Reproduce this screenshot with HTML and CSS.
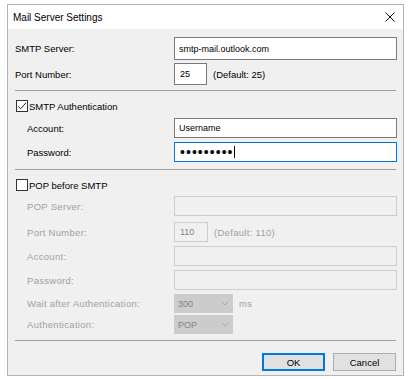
FILE: index.html
```html
<!DOCTYPE html>
<html>
<head>
<meta charset="utf-8">
<link rel="stylesheet" href="styles.css">
</head>
<body>
<div class="window">
  <div class="titlebar">
    <span class="title">Mail Server Settings</span>
    <svg class="close" width="10" height="10" viewBox="0 0 10 10"><path d="M0.5 0.5L9.5 9.5M9.5 0.5L0.5 9.5" stroke="#111" stroke-width="1" fill="none"/></svg>
  </div>
  <div class="content">
    <div class="row h23">
      <span class="label">SMTP Server:</span>
      <div class="field"><div class="input">smtp-mail.outlook.com</div></div>
    </div>
    <div class="row h22 mt3">
      <span class="label">Port Number:</span>
      <div class="field"><div class="input port">25</div><span class="hint">(Default: 25)</span></div>
    </div>
    <div class="sep sep1"></div>

    <div class="check ck1">
      <span class="box"><svg width="10" height="10" viewBox="0 0 10 10"><path d="M1 5.2L3.6 7.8L9 1.8" stroke="#222" stroke-width="1" fill="none"/></svg></span>
      <span class="cklabel">SMTP Authentication</span>
    </div>
    <div class="row indent h20 mt6">
      <span class="label">Account:</span>
      <div class="field"><div class="input">Username</div></div>
    </div>
    <div class="row indent h20 mt4">
      <span class="label">Password:</span>
      <div class="field"><div class="input focus"><span class="dots">•••••••••</span><span class="caret"></span></div></div>
    </div>
    <div class="sep sep2"></div>

    <div class="check ck2">
      <span class="box"></span>
      <span class="cklabel">POP before SMTP</span>
    </div>
    <div class="row indent dis h20 mt5">
      <span class="label">POP Server:</span>
      <div class="field"><div class="input"></div></div>
    </div>
    <div class="row indent dis h20 mt6">
      <span class="label">Port Number:</span>
      <div class="field"><div class="input port2">110</div><span class="hint">(Default: 110)</span></div>
    </div>
    <div class="row indent dis h20 mt4">
      <span class="label">Account:</span>
      <div class="field"><div class="input"></div></div>
    </div>
    <div class="row indent dis h20 mt4">
      <span class="label">Password:</span>
      <div class="field"><div class="input"></div></div>
    </div>
    <div class="row indent dis h19 mt4">
      <span class="label">Wait after Authentication:</span>
      <div class="field"><div class="select"><span>300</span><svg width="8" height="5" viewBox="0 0 8 5"><path d="M0.5 0.5L4 4L7.5 0.5" stroke="#a8a8a8" stroke-width="1" fill="none"/></svg></div><span class="hint">ms</span></div>
    </div>
    <div class="row indent dis h19 mt2">
      <span class="label">Authentication:</span>
      <div class="field"><div class="select"><span>POP</span><svg width="8" height="5" viewBox="0 0 8 5"><path d="M0.5 0.5L4 4L7.5 0.5" stroke="#a8a8a8" stroke-width="1" fill="none"/></svg></div></div>
    </div>
    <div class="sep sep3"></div>
    <div class="buttons">
      <div class="btn default">OK</div>
      <div class="btn">Cancel</div>
    </div>
  </div>
</div>
</body>
</html>
```

FILE: styles.css
```css
html, body {
  margin: 0;
  padding: 0;
  background: #ffffff;
}
body {
  font-family: "Liberation Sans", Arial, sans-serif;
  font-size: 9.5px;
  color: #000;
}
.window {
  margin: 4px 0 0 7px;
  width: 395px;
  height: 370px;
  border: 1px solid #b4b4b4;
  background: #f0f0f0;
  display: flex;
  flex-direction: column;
}
.titlebar {
  height: 24px;
  background: #ffffff;
  display: flex;
  align-items: center;
  justify-content: space-between;
  padding: 0 8px 0 5px;
  flex: none;
}
.title {
  font-size: 10px;
  color: #000;
}
.close {
  display: block;
  margin-top: -1px;
}
.content {
  padding: 8px 6px 0 7px;
  display: flex;
  flex-direction: column;
}
.row {
  display: grid;
  grid-template-columns: 159px 1fr;
  align-items: center;
}
.row.indent {
  padding-left: 12px;
  grid-template-columns: 147px 1fr;
}
.h23 { height: 23px; }
.h22 { height: 22px; }
.h20 { height: 20px; }
.h19 { height: 19px; }
.mt2 { margin-top: 2px; }
.mt3 { margin-top: 3px; }
.mt4 { margin-top: 4px; }
.mt5 { margin-top: 5px; }
.mt6 { margin-top: 6px; }
.field {
  display: flex;
  align-items: center;
  height: 100%;
  gap: 6px;
}
.input {
  box-sizing: border-box;
  height: 100%;
  flex: 1;
  border: 1px solid #7a7a7a;
  background: #fff;
  padding-left: 4px;
  display: flex;
  align-items: center;
  font-size: 9px;
}
.input.port {
  flex: none;
  width: 33px;
  padding-left: 5px;
}
.input.focus {
  border-color: #0078d7;
}
.dots {
  font-size: 14px;
  letter-spacing: 1.05px;
  line-height: 1;
  margin-left: 1px;
  margin-top: -1px;
}
.caret {
  width: 1px;
  height: 12px;
  background: #000;
  margin-left: 0px;
}
.hint {
  white-space: nowrap;
}
.sep {
  height: 1px;
  background: #a0a0a0;
  margin-right: 1px;
}
.sep1 { margin-top: 5px; }
.sep2 { margin-top: 7px; }
.sep3 { margin-top: 6px; }
.check {
  display: flex;
  align-items: center;
  height: 12px;
  padding-left: 1px;
}
.ck1 { margin-top: 9px; }
.ck2 { margin-top: 9px; }
.box {
  box-sizing: border-box;
  width: 12px;
  height: 12px;
  border: 1px solid #333;
  background: #fff;
  display: flex;
  align-items: center;
  justify-content: center;
  flex: none;
}
.ck2 .box {
  background: #fff;
}
.cklabel {
  margin-left: 1px;
}
.dis .label,
.dis .hint {
  color: #a0a0a0;
  letter-spacing: 0.3px;
}
.dis .input {
  border-color: #cccccc;
  background: #f0f0f0;
  color: #838383;
}
.dis .input.port2 {
  flex: none;
  width: 34px;
  padding-left: 5px;
}
.select {
  box-sizing: border-box;
  width: 59px;
  height: 100%;
  background: #cccccc;
  color: #838383;
  font-size: 9px;
  display: flex;
  align-items: center;
  justify-content: space-between;
  padding: 0 4px 0 4px;
}
.select svg {
  display: block;
}
.buttons {
  display: flex;
  justify-content: flex-end;
  gap: 8px;
  margin-top: 12px;
  margin-right: 1px;
}
.btn {
  box-sizing: border-box;
  width: 63px;
  height: 18px;
  background: #e1e1e1;
  border: 1px solid #adadad;
  display: flex;
  align-items: center;
  justify-content: center;
}
.btn.default {
  border: 2px solid #0078d7;
}
```
